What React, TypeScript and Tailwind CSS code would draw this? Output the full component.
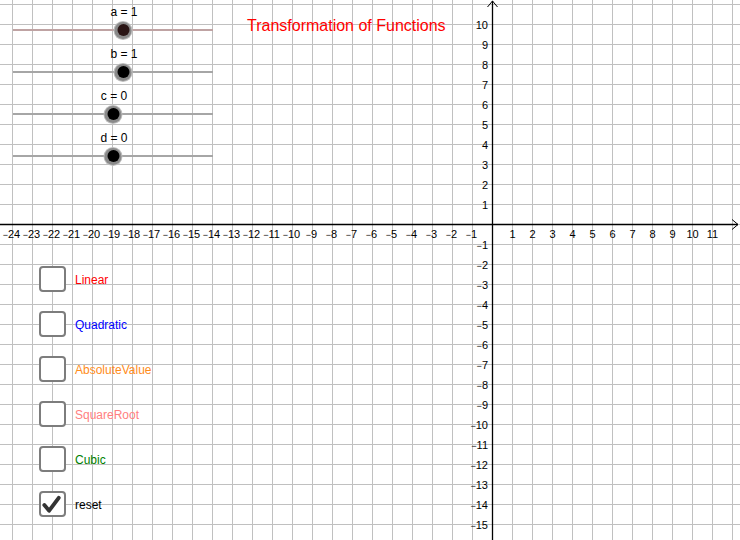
import React from 'react';

const W = 740;
const H = 540;
const OX = 492.5;
const OY = 224.5;
const U = 20;

const sliders = [
  { name: 'a', value: 1, track: 'bg-[#bfa3a3]', dot: 'bg-[#2b1616]' },
  { name: 'b', value: 1, track: 'bg-[#a6a6a6]', dot: 'bg-black' },
  { name: 'c', value: 0, track: 'bg-[#a6a6a6]', dot: 'bg-black' },
  { name: 'd', value: 0, track: 'bg-[#a6a6a6]', dot: 'bg-black' },
];

const toggles = [
  { label: 'Linear', color: 'text-[#ff0000]', checked: false },
  { label: 'Quadratic', color: 'text-[#0000ff]', checked: false },
  { label: 'AbsoluteValue', color: 'text-[#ff8c1a]', checked: false },
  { label: 'SquareRoot', color: 'text-[#ff8080]', checked: false },
  { label: 'Cubic', color: 'text-[#007f00]', checked: false },
  { label: 'reset', color: 'text-black', checked: true },
];

// tick label: narrow minus like the original renderer
function Tick({ n }: { n: number }) {
  if (n >= 0) return <>{n}</>;
  return (
    <>
      <tspan fontSize={9}>{'\u2212'}</tspan>
      {-n}
    </>
  );
}

function Grid() {
  const vx: number[] = [];
  for (let x = 12.5; x < W; x += U) vx.push(x);
  const hy: number[] = [];
  for (let y = 4.5; y < H; y += U) hy.push(y);

  const xs: number[] = [];
  for (let k = -24; k <= 11; k++) if (k !== 0) xs.push(k);
  const ys: number[] = [];
  for (let k = 10; k >= -15; k--) if (k !== 0) ys.push(k);

  return (
    <svg width={W} height={H} className="absolute inset-0" style={{ fontFamily: '"Liberation Sans", Arial, sans-serif' }}>
      {vx.map((x) => (
        <line key={`v${x}`} x1={x} y1={0} x2={x} y2={H} stroke="#c0c0c0" strokeWidth={1} />
      ))}
      {hy.map((y) => (
        <line key={`h${y}`} x1={0} y1={y} x2={W} y2={y} stroke="#c0c0c0" strokeWidth={1} />
      ))}
      {/* axes */}
      <line x1={0} y1={OY} x2={738} y2={OY} stroke="#000" strokeWidth={1.3} />
      <polyline points="732,219.5 738,224.5 732,229.5" fill="none" stroke="#000" strokeWidth={1} />
      <line x1={OX} y1={H} x2={OX} y2={1} stroke="#000" strokeWidth={1.3} />
      <polyline points="487.5,7 492.5,1 497.5,7" fill="none" stroke="#000" strokeWidth={1} />
      {xs.map((k) => (
        <text key={`x${k}`} x={OX + k * U - (k < 0 ? 1 : 0)} y={238} fontSize={11} textAnchor="middle" fill="#000">
          <Tick n={k} />
        </text>
      ))}
      {ys.map((k) => (
        <text key={`y${k}`} x={488} y={OY - k * U + 4} fontSize={11} textAnchor="end" fill="#000">
          <Tick n={k} />
        </text>
      ))}
    </svg>
  );
}

function Slider({ name, value, track, dot }: (typeof sliders)[number]) {
  const left = (value + 10) * 10;
  return (
    <div className="relative h-[42px] w-[200px]">
      <span
        className="absolute top-[5px] -translate-x-1/2 whitespace-nowrap text-[12px] leading-[14px] text-black"
        style={{ left: left + 1 }}
      >
        {name} = {value}
      </span>
      <div className={`absolute left-0 top-[29px] h-[2px] w-[200px] ${track}`} />
      <div
        className="absolute top-[21.5px] flex h-[17px] w-[17px] -translate-x-1/2 items-center justify-center rounded-full bg-[#8a8a8a] ring-1 ring-[#bdbdbd]"
        style={{ left }}
      >
        <div className={`h-[12px] w-[12px] rounded-full ${dot}`} />
      </div>
    </div>
  );
}

function Toggle({ label, color, checked }: (typeof toggles)[number]) {
  return (
    <div className="flex h-[26px] items-center gap-[9px]">
      <div className="flex h-[26px] w-[27px] items-center justify-center rounded-[4px] border-2 border-[#7d7d7d] bg-white">
        {checked && (
          <svg width="24" height="24" viewBox="0 0 24 24">
            <polyline
              points="3.5,13 8.5,19 18.5,5.5"
              fill="none"
              stroke="#333"
              strokeWidth={4}
              strokeLinecap="round"
              strokeLinejoin="round"
            />
          </svg>
        )}
      </div>
      <span className={`pt-[2px] text-[12px] leading-[14px] ${color}`}>{label}</span>
    </div>
  );
}

export default function App() {
  return (
    <div
      className="relative h-[540px] w-[740px] overflow-hidden bg-white"
      style={{ fontFamily: '"Liberation Sans", Arial, sans-serif' }}
    >
      <Grid />

      <div className="absolute left-[13px] top-0 flex flex-col">
        {sliders.map((s) => (
          <Slider key={s.name} {...s} />
        ))}
      </div>

      <div className="absolute left-[247px] top-[18px] text-[16px] leading-[16px] text-[#ff0000]">
        Transformation of Functions
      </div>

      <div className="absolute left-[39px] top-[266px] flex flex-col gap-[19px]">
        {toggles.map((t) => (
          <Toggle key={t.label} {...t} />
        ))}
      </div>
    </div>
  );
}
